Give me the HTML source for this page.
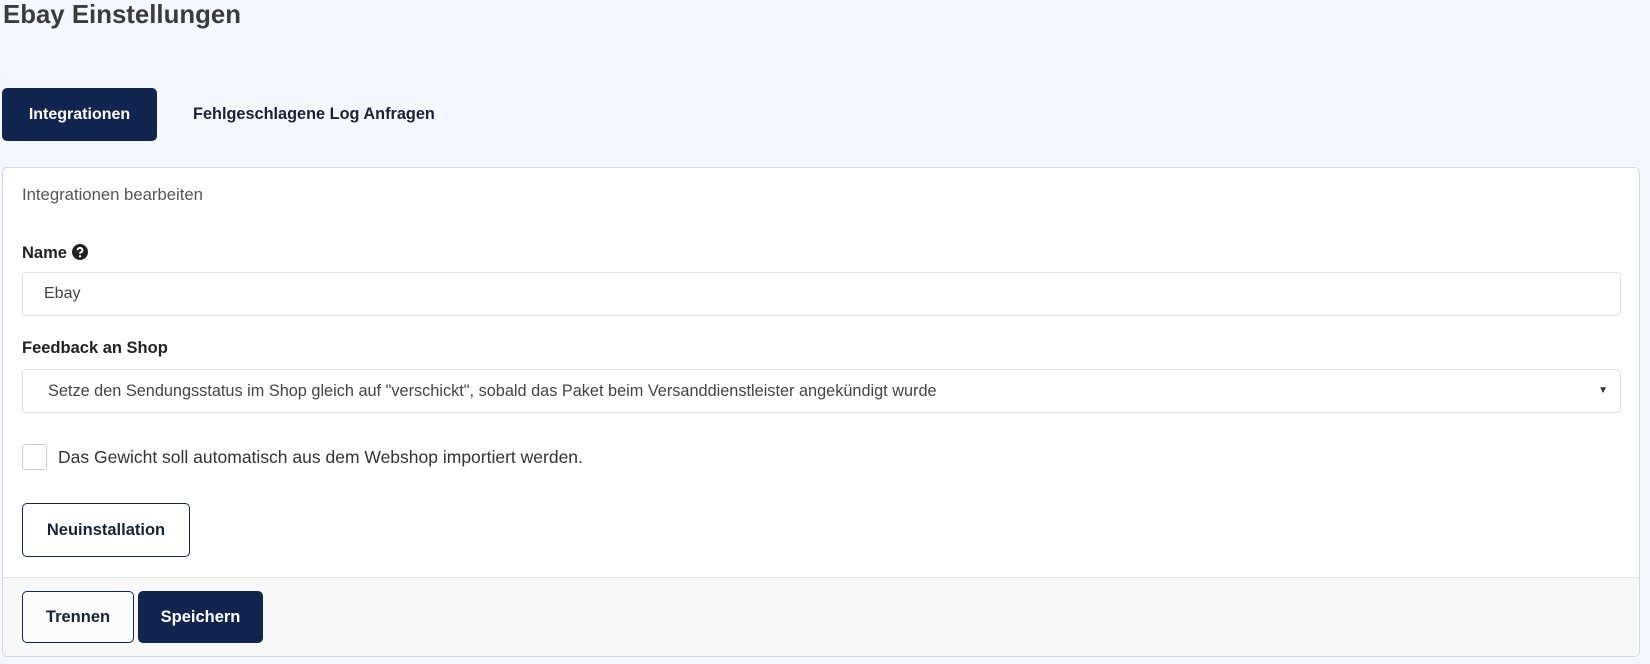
<!DOCTYPE html>
<html><head><meta charset="utf-8"><style>
*{box-sizing:border-box;margin:0;padding:0}
body{width:1650px;height:664px;background:#f4f8fe;font-family:"Liberation Sans",sans-serif;color:#333;position:relative;overflow:hidden}
.abs{position:absolute}
h1{position:absolute;left:3px;top:1px;font-size:25.8px;font-weight:bold;color:#3b3b3b}
.tab{left:2px;top:88px;width:155px;height:53px;background:#12254f;border-radius:5px;color:#fff;font-weight:bold;font-size:16px;line-height:53px;text-align:center}
.tab2{left:193px;top:88px;height:53px;line-height:53px;font-weight:bold;font-size:16.3px;color:#1a2238}
.card{left:2px;top:167px;width:1638px;height:490px;background:#fff;border:1px solid #d3dce6;border-radius:5px;overflow:hidden}
.foot{left:0;top:409px;width:100%;height:81px;background:#f8f8f8;border-top:1px solid #e6e6e6}
.input{border:1px solid #dde3e8;border-radius:4px;background:#fff;font-size:16px;color:#444;padding-left:21px}
.lbl{font-weight:bold;font-size:16.5px;color:#222}
.btn{border:1px solid #12254f;border-radius:5px;font-weight:bold;font-size:16.5px;text-align:center;color:#1a2238;background:#fff}
</style></head><body>
<h1>Ebay Einstellungen</h1>
<div class="abs tab">Integrationen</div>
<div class="abs tab2">Fehlgeschlagene Log Anfragen</div>
<div class="abs card">
  <div class="abs" style="left:19px;top:17px;font-size:16.7px;color:#555">Integrationen bearbeiten</div>
  <div class="abs lbl" style="left:19px;top:76px">Name <svg width="16" height="16" viewBox="0 0 16 16" style="vertical-align:-2px"><circle cx="8" cy="8" r="8" fill="#222"/><path d="M5.6 6.2a2.4 2.3 0 1 1 3.4 2.1c-.7.4-1 .7-1 1.5" stroke="#fff" stroke-width="2" fill="none"/><circle cx="8" cy="12.3" r="1.2" fill="#fff"/></svg></div>
  <div class="abs input" style="left:19px;top:104px;width:1599px;height:44px;line-height:42px">Ebay</div>
  <div class="abs lbl" style="left:19px;top:171px">Feedback an Shop</div>
  <div class="abs input" style="left:19px;top:201px;width:1599px;height:44px;line-height:42px;padding-left:25px;font-size:16.3px">Setze den Sendungsstatus im Shop gleich auf "verschickt", sobald das Paket beim Versanddienstleister angekündigt wurde<span class="abs" style="right:12px;top:0;font-size:10px;color:#333">▼</span></div>
  <div class="abs" style="left:19px;top:276px;width:25px;height:26px;border:1px solid #ccc;border-radius:3px"></div>
  <div class="abs" style="left:55px;top:279px;font-size:17.5px;color:#333">Das Gewicht soll automatisch aus dem Webshop importiert werden.</div>
  <div class="abs btn" style="left:19px;top:335px;width:168px;height:54px;line-height:52px">Neuinstallation</div>
  <div class="abs foot">
    <div class="abs btn" style="left:19px;top:13px;width:112px;height:52px;line-height:50px;background:#fbfbfb">Trennen</div>
    <div class="abs btn" style="left:135px;top:13px;width:125px;height:52px;line-height:50px;background:#12254f;color:#fff">Speichern</div>
  </div>
</div>
</body></html>
